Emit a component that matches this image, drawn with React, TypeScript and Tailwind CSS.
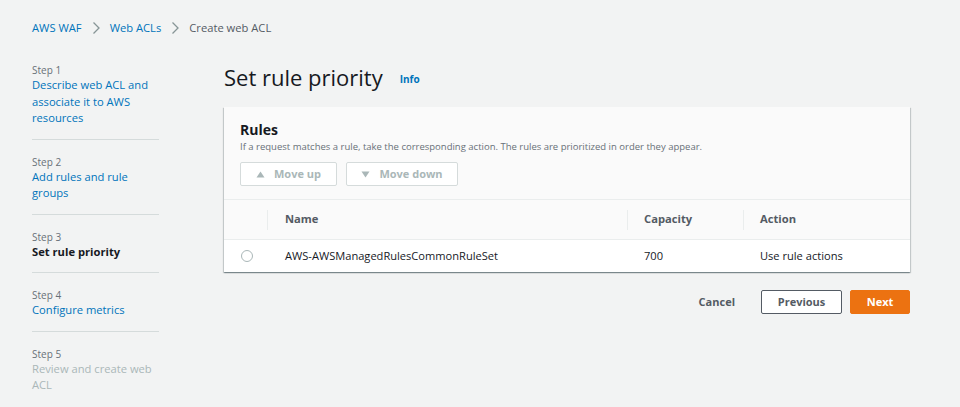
export default function App() {
  const steps = [
    { n: 1, label: "Describe web ACL and associate it to AWS resources", state: "link" },
    { n: 2, label: "Add rules and rule groups", state: "link" },
    { n: 3, label: "Set rule priority", state: "active" },
    { n: 4, label: "Configure metrics", state: "link" },
    { n: 5, label: "Review and create web ACL", state: "disabled" },
  ]

  return (
    <div className="w-[960px] h-[407px] overflow-hidden bg-[#f2f3f3] text-[#16191f] font-['Open_Sans',sans-serif]">
      <div className="flex items-center h-[16px] mt-[20px] ml-[32px] text-[11.2px]">
        <span className="text-[#0073bb]">AWS WAF</span>
        <Chevron />
        <span className="text-[#0073bb]">Web ACLs</span>
        <Chevron />
        <span className="text-[#545b64]">Create web ACL</span>
      </div>

      <div className="flex mt-[27px] ml-[32px]">
        <nav className="w-[127px] shrink-0">
          {steps.map((s, i) => (
            <div key={s.n} className={i > 0 ? "border-t border-[#d5dbdb] pt-[15px] pb-[12px]" : "pb-[12px]"}>
              <div className="text-[10px] leading-[14px] text-[#687078]">Step {s.n}</div>
              <div
                className={
                  "text-[11.2px] leading-[16.5px] " +
                  (s.state === "active"
                    ? "font-bold text-[#16191f]"
                    : s.state === "disabled"
                    ? "text-[#aab7b8]"
                    : "text-[#0073bb]")
                }
              >
                {s.label}
              </div>
            </div>
          ))}
        </nav>

        <main className="ml-[65px] w-[686px]">
          <div className="flex items-end h-[28px]">
            <h1 className="text-[22px] leading-[28px] text-[#16191f]">Set rule priority</h1>
            <span className="ml-[17px] mb-[4px] text-[10px] font-bold text-[#0073bb]">Info</span>
          </div>

          <div className="mt-[16px] bg-white shadow-[0_1px_1px_0_rgba(0,28,36,0.3),1px_1px_1px_0_rgba(0,28,36,0.15),-1px_1px_1px_0_rgba(0,28,36,0.15)]">
            <div className="bg-[#fafafa] px-[16px] pt-[14px] pb-[13px]">
              <div className="text-[14px] leading-[18px] font-bold">Rules</div>
              <div className="mt-[1px] text-[9.5px] leading-[14px] text-[#687078]">
                If a request matches a rule, take the corresponding action. The rules are prioritized in order they appear.
              </div>
              <div className="flex gap-[9px] mt-[8px]">
                <DisabledButton dir="up" label="Move up" width="w-[97px]" />
                <DisabledButton dir="down" label="Move down" width="w-[112px]" />
              </div>
            </div>

            <div className="flex h-[41px] items-center bg-[#fafafa] border-t border-b border-[#eaeded] text-[11.2px] font-bold text-[#545b64]">
              <div className="w-[44px] h-full flex items-center justify-end">
                <span className="h-[20px] border-r border-[#eaeded]" />
              </div>
              <div className="w-[360px] h-full flex items-center justify-between pl-[17px]">
                <span>Name</span>
                <span className="h-[20px] border-r border-[#eaeded]" />
              </div>
              <div className="w-[116px] h-full flex items-center justify-between pl-[16px]">
                <span>Capacity</span>
                <span className="h-[20px] border-r border-[#eaeded]" />
              </div>
              <div className="pl-[16px]">Action</div>
            </div>

            <div className="flex h-[32px] items-center text-[11.1px] text-[#16191f]">
              <div className="w-[44px] flex justify-center pl-[1px]">
                <span className="w-[12px] h-[12px] rounded-full border border-[#aab7b8] bg-white" />
              </div>
              <div className="w-[360px] pl-[17px]">AWS-AWSManagedRulesCommonRuleSet</div>
              <div className="w-[116px] pl-[16px]">700</div>
              <div className="pl-[16px]">Use rule actions</div>
            </div>
          </div>

          <div className="flex justify-end items-center mt-[18px] gap-[8px]">
            <button className="px-[18px] h-[24px] text-[11px] font-bold text-[#545b64]">Cancel</button>
            <button className="w-[81px] h-[24px] border border-[#545b64] bg-white rounded-[2px] text-[11px] font-bold text-[#545b64]">
              Previous
            </button>
            <button className="w-[60px] h-[24px] bg-[#ec7211] border border-[#ec7211] rounded-[2px] text-[11px] font-bold text-white">
              Next
            </button>
          </div>
        </main>
      </div>
    </div>
  )
}

function Chevron() {
  return (
    <svg className="mx-[9px]" width="10" height="14" viewBox="0 0 10 14" fill="none">
      <path d="M2.5 1.5 L8 7 L2.5 12.5" stroke="#879596" strokeWidth="1.3" />
    </svg>
  )
}

function DisabledButton({ dir, label, width }: { dir: "up" | "down"; label: string; width: string }) {
  return (
    <div
      className={
        width +
        " h-[24px] flex items-center justify-center gap-[9px] border border-[#d5dbdb] bg-white rounded-[2px] text-[11px] font-bold text-[#aab7b8]"
      }
    >
      <svg width="9" height="7" viewBox="0 0 9 7">
        {dir === "up" ? <path d="M4.5 0.5 L8.5 6.5 L0.5 6.5 Z" fill="#aab7b8" /> : <path d="M0.5 0.5 L8.5 0.5 L4.5 6.5 Z" fill="#aab7b8" />}
      </svg>
      <span>{label}</span>
    </div>
  )
}
